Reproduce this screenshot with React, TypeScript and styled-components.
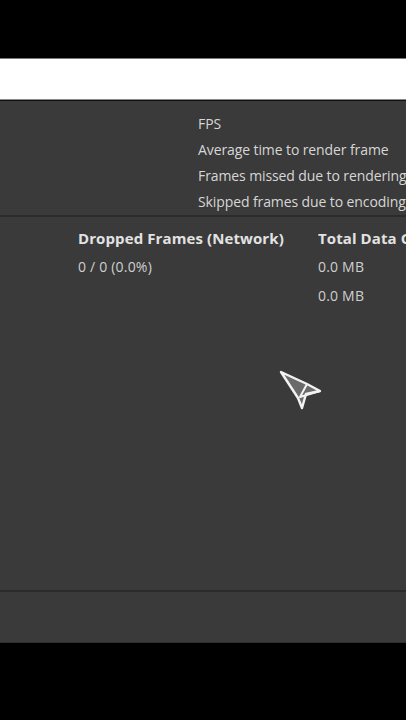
import styled, { createGlobalStyle } from "styled-components";

const Global = createGlobalStyle`
  html, body {
    margin: 0;
    padding: 0;
    background: #000;
  }
  body {
    width: 406px;
    height: 720px;
    overflow: hidden;
    font-family: "Open Sans", "Noto Sans", sans-serif;
  }
`;

const Screen = styled.div`
  display: flex;
  flex-direction: column;
  width: 406px;
  height: 720px;
  background: #000;
  overflow: hidden;
`;

const TopBlack = styled.div`
  height: 58px;
  flex-shrink: 0;
`;

const WhiteBand = styled.div`
  height: 40px;
  flex-shrink: 0;
  background: #fff;
  border-top: 1px solid #7a7a7a;
  border-bottom: 1px solid #8a8a8a;
`;

const Panel = styled.div`
  position: relative;
  height: 541px;
  flex-shrink: 0;
  display: flex;
  flex-direction: column;
  background: #3a3a3a;
  border-top: 1px solid #111;
  border-bottom: 1px solid #2e2e2e;
  color: #d6d6d6;
  font-size: 14px;
  letter-spacing: -0.1px;
`;

const StatsTop = styled.div`
  height: 116px;
  box-sizing: border-box;
  padding: 13px 0 0 198px;
  display: flex;
  flex-direction: column;
  gap: 7px;
  border-bottom: 2px solid #2b2b2b;
  white-space: nowrap;
  overflow: hidden;
`;

const StatLine = styled.div`
  line-height: 19px;
  height: 19px;
`;

const Table = styled.div`
  flex: 1;
  display: grid;
  grid-template-columns: 240px 1fr;
  grid-auto-rows: 29px;
  padding: 11px 0 0 78px;
  align-content: start;
  white-space: nowrap;
  overflow: hidden;
`;

const Cell = styled.div<{ $bold?: boolean }>`
  font-weight: ${(p) => (p.$bold ? 700 : 400)};
  color: ${(p) => (p.$bold ? "#e2e2e2" : "#cfcfcf")};
  line-height: 20px;
  font-size: ${(p) => (p.$bold ? "15px" : "14px")};
  letter-spacing: ${(p) => (p.$bold ? "0.1px" : "0.2px")};
  overflow: hidden;
`;

const Footer = styled.div`
  height: 50px;
  border-top: 2px solid #2b2b2b;
`;

const Cursor = styled.svg`
  position: absolute;
  left: 278px;
  top: 268px;
`;

export default function App() {
  return (
    <Screen>
      <Global />
      <TopBlack />
      <WhiteBand />
      <Panel>
        <StatsTop>
          <StatLine>FPS</StatLine>
          <StatLine>Average time to render frame</StatLine>
          <StatLine>Frames missed due to rendering lag</StatLine>
          <StatLine>Skipped frames due to encoding lag</StatLine>
        </StatsTop>
        <Table>
          <Cell $bold>Dropped Frames (Network)</Cell>
          <Cell $bold>Total Data Output</Cell>
          <Cell>0 / 0 (0.0%)</Cell>
          <Cell>0.0 MB</Cell>
          <Cell />
          <Cell>0.0 MB</Cell>
        </Table>
        <Footer />
        <Cursor width="46" height="42" viewBox="0 0 46 42">
          <path
            d="M3 3 L29 15 L42 22 L28 25 L24 39 L20 29 Z"
            fill="#6a6a6a"
            stroke="#f2f2f2"
            strokeWidth="2.4"
            strokeLinejoin="round"
          />
          <path
            d="M29 15 L22 28 L42 22"
            fill="none"
            stroke="#f2f2f2"
            strokeWidth="2"
            strokeLinejoin="round"
          />
        </Cursor>
      </Panel>
    </Screen>
  );
}
